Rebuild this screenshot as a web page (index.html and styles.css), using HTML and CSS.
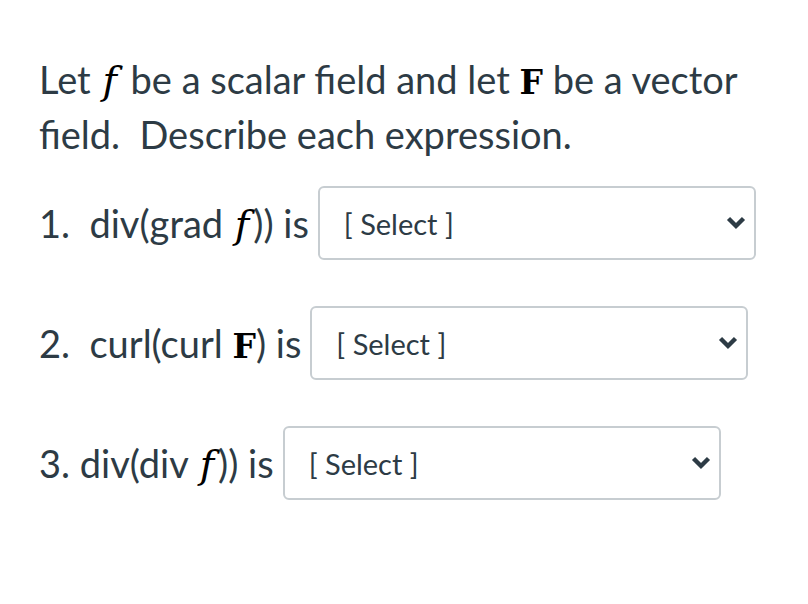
FILE: index.html
```html
<!DOCTYPE html>
<html>
<head>
<meta charset="utf-8">
<link rel="stylesheet" href="styles.css">
</head>
<body>
<div class="page">
  <p class="intro">Let <span class="mi">f</span> be a scalar field and let <span class="mb">F</span> be a vector field.&nbsp; Describe each expression.</p>
  <div class="row">
    <span class="label">1.&nbsp; div(grad <span class="mi">f</span>)) is</span>
    <div class="select"><span>[ Select ]</span><svg class="chev" viewBox="0 0 20 14" width="20" height="14"><path d="M2.5 2.5 L10 10 L17.5 2.5" fill="none" stroke="#2d3b45" stroke-width="4.4"/></svg></div>
  </div>
  <div class="row">
    <span class="label">2.&nbsp; curl(curl <span class="mb">F</span>) is</span>
    <div class="select"><span>[ Select ]</span><svg class="chev" viewBox="0 0 20 14" width="20" height="14"><path d="M2.5 2.5 L10 10 L17.5 2.5" fill="none" stroke="#2d3b45" stroke-width="4.4"/></svg></div>
  </div>
  <div class="row">
    <span class="label">3. div(div <span class="mi">f</span>)) is</span>
    <div class="select"><span>[ Select ]</span><svg class="chev" viewBox="0 0 20 14" width="20" height="14"><path d="M2.5 2.5 L10 10 L17.5 2.5" fill="none" stroke="#2d3b45" stroke-width="4.4"/></svg></div>
  </div>
</div>
</body>
</html>
```
FILE: styles.css
```css
html, body { margin: 0; padding: 0; background: #fff; }
.page {
  padding: 52px 0 0 39px;
  font-family: Lato, "Liberation Sans", sans-serif;
  color: #2d3b45;
  font-size: 38px;
  line-height: 55px;
}
.intro { margin: 0 0 24px 0; width: 740px; }
.mi { font-family: "DejaVu Serif", serif; font-style: italic; color: #000; font-size: 39px; line-height: 0; padding: 0 4px 0 2px; }
.mb { font-family: "DejaVu Serif", serif; font-weight: bold; color: #000; font-size: 33px; line-height: 0; }
.row { display: flex; align-items: center; gap: 9px; height: 74px; margin-bottom: 46px; }
.label { line-height: 55px; }
.select {
  box-sizing: border-box;
  width: 438px; height: 74px;
  border: 2px solid #c7cdd1;
  border-radius: 6px;
  display: flex; align-items: center; justify-content: space-between;
  padding: 0 8px 0 24px;
  font-size: 29px;
}
.chev { display: block; }
```
